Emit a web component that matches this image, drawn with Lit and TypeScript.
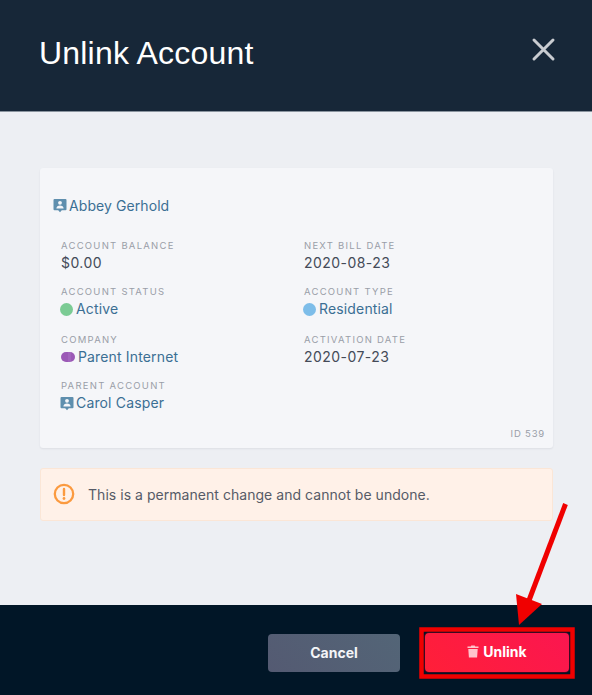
import { LitElement, html, css, svg } from "lit";
import { customElement } from "lit/decorators.js";

const personIcon = svg`<svg class="pico" viewBox="0 0 14 15" width="14" height="15"><path fill="#5f8fae" d="M1.5 1h11a1 1 0 0 1 1 1v9.200a1 1 0 0 1-1 1H8.800L7 14.200 5.200 12.200H1.500a1 1 0 0 1-1-1V2a1 1 0 0 1 1-1z"/><circle cx="7" cy="4.800" r="1.900" fill="#f5f6f9"/><path fill="#f5f6f9" d="M3.400 10.400c0-1.900 1.600-2.900 3.600-2.900s3.600 1 3.600 2.900z"/></svg>`;

@customElement("app-root")
export class AppRoot extends LitElement {
  static styles = css`
    :host { display: block; width: 592px; height: 695px; position: relative; overflow: hidden; font-family: Inter, "Liberation Sans", sans-serif; background: #edeff3; }
    * { box-sizing: border-box; }
    .modal { display: flex; flex-direction: column; height: 695px; }
    .head { height: 112px; flex: none; background: #172738; border-bottom: 1px solid #8a949e; display: flex; align-items: flex-start; justify-content: space-between; padding: 35px 36px 0 39px; }
    .head h1 { margin: 0; font: 400 32px/36px "Liberation Sans", Arial, sans-serif; letter-spacing: .2px; color: #fff; }
    .x { display: block; margin-top: 1px; }
    .main { flex: 1; padding: 56px 39px 0 40px; display: flex; flex-direction: column; gap: 20px; }
    .card { height: 280px; background: #f5f6f9; border-radius: 3px; box-shadow: 0 1px 2px rgba(30,40,60,.08); padding: 28px 8px 0 13px; position: relative; }
    .title { display: flex; align-items: center; gap: 2px; height: 18px; font-size: 14px; letter-spacing: .08px; color: #3b6f94; }
    .grid { display: grid; grid-template-columns: 243px 1fr; padding: 25px 0 0 8px; row-gap: 6px; }
    .lab { font-size: 9.500px; line-height: 13px; letter-spacing: 1.250px; color: #9a9ea8; text-transform: uppercase; }
    .val { margin-top: 1px; font-size: 14px; line-height: 20px; color: #444b58; letter-spacing: .45px; }
    .link { color: #3b6f94; letter-spacing: .15px; display: flex; align-items: center; gap: 3px; }
    .field { height: 40px; }
    .field.tall { height: 42px; }
    .dot { width: 13px; height: 13px; margin-left: -1px; border-radius: 50%; display: inline-block; flex: none; }
    .pill { width: 14px; height: 10px; border-radius: 5px; background: linear-gradient(90deg, #9b59b6 0 50%, #a265bd 50% 75%, #9b59b6 75%); display: inline-block; }
    .link .pico { margin: 0 -1px 0 -1px; }
    .id { position: absolute; right: 8px; bottom: 9px; font-size: 9.500px; letter-spacing: .8px; color: #9a9ea8; }
    .alert { height: 53px; background: #fff1e8; border: 1px solid #fbe6d6; border-radius: 3px; display: flex; align-items: center; padding-left: 12px; gap: 13px; font-size: 14px; letter-spacing: .04px; color: #565b67; }
    .alert svg { margin-top: -2px; }
    .foot { height: 90px; flex: none; background: #011627; display: flex; justify-content: flex-end; align-items: flex-start; padding: 28px 23px 0 0; gap: 25px; }
    .btn { border: 0; border-radius: 4px; color: #f4f5f8; font: 700 14px/1 Inter, "Liberation Sans", sans-serif; display: flex; align-items: center; justify-content: center; gap: 4px; padding: 0; }
    .cancel { margin-top: 1px; width: 132px; height: 38px; background: linear-gradient(45deg, #545a72, #536577); }
    .unlink { width: 144px; height: 39px; background: linear-gradient(45deg, #ff1f38, #fb1650); color: #fff; padding-bottom: 2px; box-shadow: 0 0 0 1px #3a0a22; }
    .anno { position: absolute; left: 0; top: 0; width: 592px; height: 695px; pointer-events: none; }
  `;

  render() {
    return html`
      <div class="modal">
        <header class="head">
          <h1>Unlink Account</h1>
          <svg class="x" width="26" height="26" viewBox="0 0 26 26"><path d="M4 4l19 19M23 4L4 23" stroke="#c9ccd1" stroke-width="3" stroke-linecap="round"/></svg>
        </header>
        <main class="main">
          <section class="card">
            <div class="title">${personIcon}<span>Abbey Gerhold</span></div>
            <div class="grid">
              <div class="field"><div class="lab">Account balance</div><div class="val">$0.00</div></div>
              <div class="field"><div class="lab">Next bill date</div><div class="val">2020-08-23</div></div>
              <div class="field tall"><div class="lab">Account status</div><div class="val link"><i class="dot" style="background:#7bcb94"></i>Active</div></div>
              <div class="field tall"><div class="lab">Account type</div><div class="val link"><i class="dot" style="background:#7dbde9"></i>Residential</div></div>
              <div class="field"><div class="lab">Company</div><div class="val link"><i class="pill"></i>Parent Internet</div></div>
              <div class="field"><div class="lab">Activation date</div><div class="val">2020-07-23</div></div>
              <div class="field"><div class="lab">Parent account</div><div class="val link">${personIcon}Carol Casper</div></div>
            </div>
            <div class="id">ID 539</div>
          </section>
          <div class="alert">
            <svg width="22" height="22" viewBox="0 0 22 22"><circle cx="11" cy="11" r="9.200" fill="none" stroke="#fb9a3f" stroke-width="2.300"/><path d="M11 6v6" stroke="#fb9a3f" stroke-width="2.400" stroke-linecap="round"/><circle cx="11" cy="15.500" r="1.400" fill="#fb9a3f"/></svg>
            <span>This is a permanent change and cannot be undone.</span>
          </div>
        </main>
        <footer class="foot">
          <button class="btn cancel">Cancel</button>
          <button class="btn unlink">
            <svg width="12" height="13" viewBox="0 0 12 13"><path fill="#ffc4cc" d="M4.300.5h3.400l.6 1H11.500v1.600H.5V1.500h3.200zM1.300 4h9.400l-.6 8.500H1.900z"/></svg>
            Unlink
          </button>
        </footer>
      </div>
      <svg class="anno" viewBox="0 0 592 695">
        <rect x="421.500" y="629.500" width="151" height="47" fill="none" stroke="#f00000" stroke-width="4.500"/>
        <line x1="565.500" y1="504" x2="528" y2="603" stroke="#f00000" stroke-width="5"/>
        <polygon points="516,594 542,604 519,625" fill="#f00000"/>
      </svg>
    `;
  }
}
